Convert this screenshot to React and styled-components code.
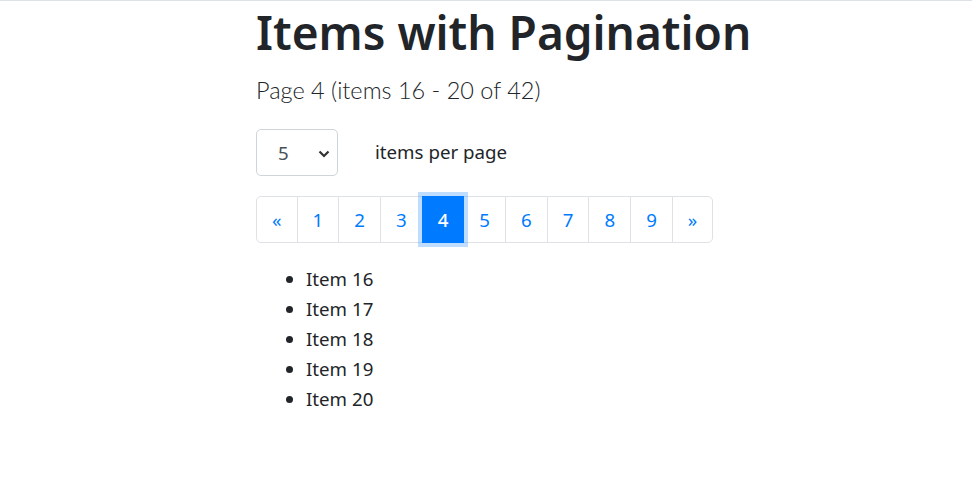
import React, { useState } from 'react';
import styled, { createGlobalStyle } from 'styled-components';

const GlobalStyle = createGlobalStyle`
  html, body {
    margin: 0;
    padding: 0;
    background: #fff;
  }
  body {
    font-family: "Noto Sans", "Open Sans", "Liberation Sans", sans-serif;
    font-size: 18.7px;
    line-height: 30px;
    color: #212529;
    border-top: 1px solid #dee2e6;
  }
`;

const Page = styled.div`
  padding-left: 256px;
`;

const Title = styled.h1`
  margin: 0 0 10px;
  padding-top: 2px;
  font-size: 46px;
  font-weight: 600;
  line-height: 58px;
`;

const Lead = styled.p`
  margin: 0 0 20px;
  font-family: "Lato", "Noto Sans", sans-serif;
  font-size: 23.5px;
  font-weight: 300;
  line-height: 38px;
`;

const PerPageRow = styled.div`
  display: flex;
  align-items: center;
  gap: 37px;
  margin-bottom: 20px;
`;

const SelectWrap = styled.div`
  position: relative;
  width: 82px;
  height: 47px;
`;

const Select = styled.select`
  appearance: none;
  width: 100%;
  height: 100%;
  padding: 0 0 0 21px;
  border: 1px solid #ced4da;
  border-radius: 5px;
  background: #fff;
  color: #495057;
  font: inherit;
`;

const Chevron = styled.svg`
  position: absolute;
  right: 8px;
  top: 21px;
  pointer-events: none;
`;

const Label = styled.span`
  padding-bottom: 2px;
`;

const Pager = styled.ul`
  display: flex;
  list-style: none;
  margin: 0 0 20px;
  padding: 0;
`;

const PageItem = styled.li`
  &:first-child a {
    border-top-left-radius: 5px;
    border-bottom-left-radius: 5px;
    margin-left: 0;
  }
  &:last-child a {
    border-top-right-radius: 5px;
    border-bottom-right-radius: 5px;
  }
`;

const PageLink = styled.a`
  position: relative;
  display: block;
  margin-left: -1px;
  padding: 10px 15px;
  line-height: 25px;
  text-decoration: none;
  cursor: pointer;
  border: 1px solid ${p => (p.$active ? '#007bff' : '#dee2e6')};
  background: ${p => (p.$active ? '#007bff' : '#fff')};
  color: ${p => (p.$active ? '#fff' : '#007bff')};
  font-weight: ${p => (p.$active ? 500 : 400)};
  z-index: ${p => (p.$active ? 3 : 'auto')};
  box-shadow: ${p => (p.$active ? '0 0 0 4px rgba(0, 123, 255, 0.25)' : 'none')};
`;

const ItemList = styled.ul`
  margin: 0;
  padding: 1px 0 0 50px;
`;

const TOTAL = 42;

export default function App() {
  const [perPage, setPerPage] = useState(5);
  const [page, setPage] = useState(4);
  const start = (page - 1) * perPage + 1;
  const end = Math.min(page * perPage, TOTAL);
  const pages = Math.ceil(TOTAL / perPage);
  const items = [];
  for (let i = start; i <= end; i++) items.push(i);

  return (
    <>
      <GlobalStyle />
      <Page>
        <Title>Items with Pagination</Title>
        <Lead>Page {page} (items {start} - {end} of {TOTAL})</Lead>
        <PerPageRow>
          <SelectWrap>
            <Select
              value={perPage}
              onChange={e => {
                setPerPage(Number(e.target.value));
                setPage(1);
              }}
            >
              <option value={5}>5</option>
              <option value={10}>10</option>
              <option value={20}>20</option>
            </Select>
            <Chevron width="12" height="8" viewBox="0 0 12 8">
              <path d="M1.5 1.5 L6 6 L10.5 1.5" fill="none" stroke="#333" strokeWidth="2.2" />
            </Chevron>
          </SelectWrap>
          <Label>items per page</Label>
        </PerPageRow>
        <Pager>
          <PageItem>
            <PageLink onClick={() => setPage(Math.max(1, page - 1))}>«</PageLink>
          </PageItem>
          {Array.from({ length: pages }, (_, i) => i + 1).map(n => (
            <PageItem key={n}>
              <PageLink $active={n === page} onClick={() => setPage(n)}>
                {n}
              </PageLink>
            </PageItem>
          ))}
          <PageItem>
            <PageLink onClick={() => setPage(Math.min(pages, page + 1))}>»</PageLink>
          </PageItem>
        </Pager>
        <ItemList>
          {items.map(n => (
            <li key={n}>Item {n}</li>
          ))}
        </ItemList>
      </Page>
    </>
  );
}
